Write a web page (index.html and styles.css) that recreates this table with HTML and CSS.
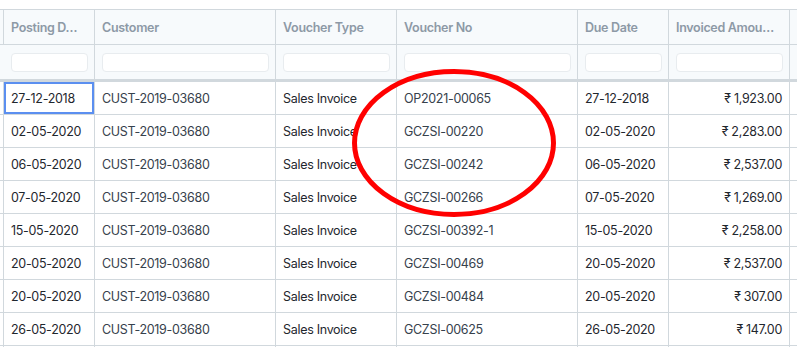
FILE: index.html
```html
<!DOCTYPE html>
<html>
<head>
<meta charset="utf-8">
<link rel="stylesheet" href="styles.css">
</head>
<body>
<div class="sheet">
  <div class="table">
    <div class="row head">
      <div class="cell stub"></div>
      <div class="cell">Posting D…</div>
      <div class="cell">Customer</div>
      <div class="cell">Voucher Type</div>
      <div class="cell">Voucher No</div>
      <div class="cell">Due Date</div>
      <div class="cell">Invoiced Amou…</div>
      <div class="cell tail"></div>
    </div>
    <div class="row filters">
      <div class="cell stub"></div>
      <div class="cell"><span class="input"></span></div>
      <div class="cell"><span class="input"></span></div>
      <div class="cell"><span class="input"></span></div>
      <div class="cell"><span class="input"></span></div>
      <div class="cell"><span class="input"></span></div>
      <div class="cell"><span class="input"></span></div>
      <div class="cell tail"></div>
    </div>
    <div class="body">
      <div class="row">
        <div class="cell stub"></div>
        <div class="cell focus">27-12-2018</div>
        <div class="cell link">CUST-2019-03680</div>
        <div class="cell">Sales Invoice</div>
        <div class="cell link">OP2021-00065</div>
        <div class="cell">27-12-2018</div>
        <div class="cell num">₹ 1,923.00</div>
        <div class="cell tail"></div>
      </div>
      <div class="row">
        <div class="cell stub"></div>
        <div class="cell">02-05-2020</div>
        <div class="cell link">CUST-2019-03680</div>
        <div class="cell">Sales Invoice</div>
        <div class="cell link">GCZSI-00220</div>
        <div class="cell">02-05-2020</div>
        <div class="cell num">₹ 2,283.00</div>
        <div class="cell tail"></div>
      </div>
      <div class="row">
        <div class="cell stub"></div>
        <div class="cell">06-05-2020</div>
        <div class="cell link">CUST-2019-03680</div>
        <div class="cell">Sales Invoice</div>
        <div class="cell link">GCZSI-00242</div>
        <div class="cell">06-05-2020</div>
        <div class="cell num">₹ 2,537.00</div>
        <div class="cell tail"></div>
      </div>
      <div class="row">
        <div class="cell stub"></div>
        <div class="cell">07-05-2020</div>
        <div class="cell link">CUST-2019-03680</div>
        <div class="cell">Sales Invoice</div>
        <div class="cell link">GCZSI-00266</div>
        <div class="cell">07-05-2020</div>
        <div class="cell num">₹ 1,269.00</div>
        <div class="cell tail"></div>
      </div>
      <div class="row">
        <div class="cell stub"></div>
        <div class="cell">15-05-2020</div>
        <div class="cell link">CUST-2019-03680</div>
        <div class="cell">Sales Invoice</div>
        <div class="cell link">GCZSI-00392-1</div>
        <div class="cell">15-05-2020</div>
        <div class="cell num">₹ 2,258.00</div>
        <div class="cell tail"></div>
      </div>
      <div class="row">
        <div class="cell stub"></div>
        <div class="cell">20-05-2020</div>
        <div class="cell link">CUST-2019-03680</div>
        <div class="cell">Sales Invoice</div>
        <div class="cell link">GCZSI-00469</div>
        <div class="cell">20-05-2020</div>
        <div class="cell num">₹ 2,537.00</div>
        <div class="cell tail"></div>
      </div>
      <div class="row">
        <div class="cell stub"></div>
        <div class="cell">20-05-2020</div>
        <div class="cell link">CUST-2019-03680</div>
        <div class="cell">Sales Invoice</div>
        <div class="cell link">GCZSI-00484</div>
        <div class="cell">20-05-2020</div>
        <div class="cell num">₹ 307.00</div>
        <div class="cell tail"></div>
      </div>
      <div class="row">
        <div class="cell stub"></div>
        <div class="cell">26-05-2020</div>
        <div class="cell link">CUST-2019-03680</div>
        <div class="cell">Sales Invoice</div>
        <div class="cell link">GCZSI-00625</div>
        <div class="cell">26-05-2020</div>
        <div class="cell num">₹ 147.00</div>
        <div class="cell tail"></div>
      </div>
      <div class="row">
        <div class="cell stub"></div>
        <div class="cell"></div>
        <div class="cell"></div>
        <div class="cell"></div>
        <div class="cell"></div>
        <div class="cell"></div>
        <div class="cell"></div>
        <div class="cell tail"></div>
      </div>
    </div>
  </div>
  <svg class="annotation" width="204" height="148" viewBox="0 0 204 148">
    <ellipse cx="102" cy="74" rx="99.5" ry="71.5" fill="none" stroke="#ff0000" stroke-width="5"/>
  </svg>
</div>
</body>
</html>
```
FILE: styles.css
```css
html, body {
  margin: 0;
  padding: 0;
  background: #ffffff;
}

body {
  font-family: Inter, "Noto Sans", "DejaVu Sans", sans-serif;
  font-size: 12.5px;
  letter-spacing: -0.3px;
  color: #1f272e;
  overflow: hidden;
}

.sheet {
  position: relative;
  width: 797px;
  height: 347px;
  overflow: hidden;
  padding-top: 9px;
  box-sizing: border-box;
}

.table {
  border-top: 1px solid #d1d8dd;
}

.row {
  display: grid;
  grid-template-columns: 4px 91px 181px 121px 181px 91px 121px 1fr;
}

.cell {
  box-sizing: border-box;
  border-right: 1px solid #d1d8dd;
  border-bottom: 1px solid #d1d8dd;
  padding: 0 7px;
  height: 33px;
  display: flex;
  align-items: center;
  white-space: nowrap;
  overflow: hidden;
}

.stub {
  padding: 0;
}

.tail {
  border-right: none;
}

.head .cell {
  height: 35px;
  background: #f7fafc;
  color: #8d99a6;
  font-weight: 600;
}

.filters .cell {
  height: 37px;
  background: #f7fafc;
  border-bottom: 3px solid #d1d8dd;
  padding: 0 6px 0 7px;
}

.input {
  display: block;
  width: 100%;
  height: 19px;
  background: #ffffff;
  border: 1px solid #e8ecef;
  border-radius: 4px;
  box-sizing: border-box;
}

.body .stub {
  background: #ffffff;
}

.link {
  color: #36414c;
}

.num {
  justify-content: flex-end;
}

.focus {
  box-shadow: inset 0 0 0 2px #5b8ff0;
}

.annotation {
  position: absolute;
  left: 352px;
  top: 69px;
}
```
